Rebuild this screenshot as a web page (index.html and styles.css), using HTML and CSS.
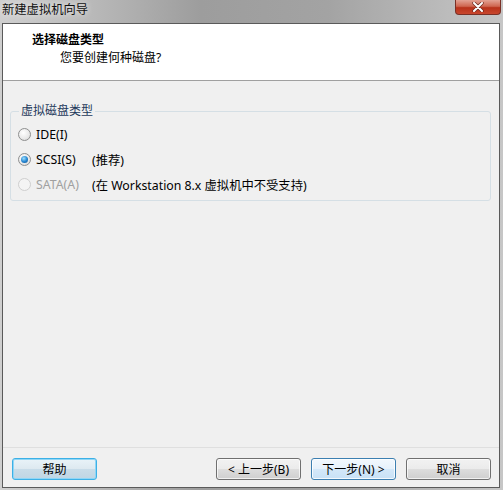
FILE: index.html
```html
<!DOCTYPE html>
<html lang="zh-CN">
<head>
    <meta charset="UTF-8">
    <title>新建虚拟机向导</title>
    <link rel="stylesheet" href="styles.css">
</head>
<body>
    <div class="window">
        <!-- Barra de título -->
        <div class="titlebar">
            <span class="title">新建虚拟机向导</span>
            <div class="close">
                <svg width="14" height="10" viewBox="0 0 14 10">
                    <path d="M3 1 L11 9 M11 1 L3 9" stroke="#6b2a20" stroke-width="3.4" stroke-linecap="round"/>
                    <path d="M3 1 L11 9 M11 1 L3 9" stroke="#fff" stroke-width="2" stroke-linecap="round"/>
                </svg>
            </div>
        </div>

        <div class="client">
            <!-- Cabeçalho branco -->
            <div class="header">
                <div class="head-title">选择磁盘类型</div>
                <div class="head-sub">您要创建何种磁盘?</div>
            </div>

            <div class="content">
                <fieldset class="group">
                    <legend>虚拟磁盘类型</legend>
                    <div class="option">
                        <span class="radio"></span>
                        <span class="label">IDE(I)</span>
                    </div>
                    <div class="option">
                        <span class="radio checked"></span>
                        <span class="label">SCSI(S)</span>
                        <span class="note">(推荐)</span>
                    </div>
                    <div class="option disabled">
                        <span class="radio"></span>
                        <span class="label">SATA(A)</span>
                        <span class="note">(在 Workstation 8.x 虚拟机中不受支持)</span>
                    </div>
                </fieldset>
            </div>

            <!-- Botões -->
            <div class="footer">
                <button class="btn focus">帮助</button>
                <div class="spacer"></div>
                <button class="btn">&lt; 上一步(B)</button>
                <button class="btn default">下一步(N) &gt;</button>
                <button class="btn">取消</button>
            </div>
        </div>
    </div>
</body>
</html>
```

FILE: styles.css
```css
/* Geral */
body {
    margin: 0;
    font-family: "Noto Sans", "Noto Sans CJK SC", sans-serif;
    font-size: 12px;
    color: #000;
}

.window {
    width: 503px;
    height: 490px;
    box-sizing: border-box;
    padding: 0 3px 2px 2px;
    display: flex;
    flex-direction: column;
    background: linear-gradient(90deg, #cfcfcf 0%, #bdbdbd 15%, #9d9d9d 40%, #a3a3a3 65%, #b8b8b8 85%, #c6c6c6 100%);
}

/* Barra de título */
.titlebar {
    height: 23px;
    display: flex;
    justify-content: space-between;
    align-items: flex-start;
    flex-shrink: 0;
}

.title {
    font-size: 12.3px;
    line-height: 20px;
    color: #111;
    text-shadow: 0 0 6px rgba(255, 255, 255, 0.9);
}

.close {
    width: 44px;
    height: 14px;
    margin-right: -1px;
    border: 1px solid #7a3026;
    border-top: none;
    border-radius: 0 0 4px 4px;
    background: linear-gradient(#e3a294 0%, #cf6650 45%, #b8321a 55%, #c8472e 100%);
    display: flex;
    justify-content: center;
    align-items: center;
}

/* Área cliente */
.client {
    flex: 1;
    border: 1px solid #5a5a5a;
    background-color: #f0f0f0;
    display: flex;
    flex-direction: column;
}

.header {
    height: 57px;
    box-sizing: border-box;
    background-color: #fff;
    border-bottom: 1px solid #a0a0a0;
    padding: 7px 0 0 29px;
}

.head-title {
    font-weight: bold;
    line-height: 18px;
}

.head-sub {
    line-height: 18px;
    padding-left: 28px;
}

.content {
    flex: 1;
    padding: 23px 8px 0 7px;
}

/* Caixa de grupo */
.group {
    margin: 0;
    padding: 4px 0 7px 7px;
    border: 1px solid #d5dfe5;
    border-radius: 3px;
    height: 97px;
    box-sizing: border-box;
}

.group legend {
    padding: 0 2px;
    margin-left: 1px;
    line-height: 14px;
    color: #1e395b;
}

.option {
    display: flex;
    align-items: center;
    height: 25px;
    font-size: 12.3px;
}

.option .label {
    margin-left: 5px;
    width: 50px;
}

.option .note {
    margin-left: 6px;
}

.option.disabled .label {
    color: #a0a0a0;
}

.radio {
    width: 11px;
    height: 11px;
    border-radius: 50%;
    border: 1px solid #8e8f8f;
    background: radial-gradient(circle at 40% 35%, #fff 0%, #e8e8e8 60%, #d0d0d0 100%);
    display: flex;
    justify-content: center;
    align-items: center;
    box-sizing: content-box;
}

.radio.checked::after {
    content: "";
    width: 7px;
    height: 7px;
    border-radius: 50%;
    background: radial-gradient(circle at 40% 35%, #9ee0ff 0%, #2a8ad4 50%, #0d4f8c 100%);
}

.option.disabled .radio {
    border-color: #cfcfcf;
    background: #f4f4f4;
}

/* Rodapé */
.footer {
    border-top: 1px solid #dfdfdf;
    height: 40px;
    box-sizing: border-box;
    display: flex;
    align-items: flex-start;
    padding: 10px 8px 0 9px;
    gap: 10px;
}

.spacer {
    flex: 1;
}

.btn {
    width: 85px;
    height: 22px;
    padding: 0;
    font-family: "Noto Sans", "Noto Sans CJK SC", sans-serif;
    font-size: 12px;
    color: #000;
    border: 1px solid #707070;
    border-radius: 3px;
    background: linear-gradient(#f2f2f2 0%, #ebebeb 50%, #dddddd 51%, #cfcfcf 100%);
    box-shadow: inset 0 0 0 1px rgba(255, 255, 255, 0.7);
}

.btn.focus {
    border-color: #3cb0e6;
    background: linear-gradient(#e9f3f8 0%, #dde9f0 50%, #c9dce8 51%, #bfd6e4 100%);
    box-shadow: inset 0 0 0 1px #8fd6f6;
}

.btn.default {
    border-color: #3c7fb1;
    background: linear-gradient(#f2f8fd 0%, #e6f1fb 50%, #d4e8f9 51%, #c8e1f6 100%);
    box-shadow: inset 0 0 0 1px rgba(255, 255, 255, 0.8);
}
```
